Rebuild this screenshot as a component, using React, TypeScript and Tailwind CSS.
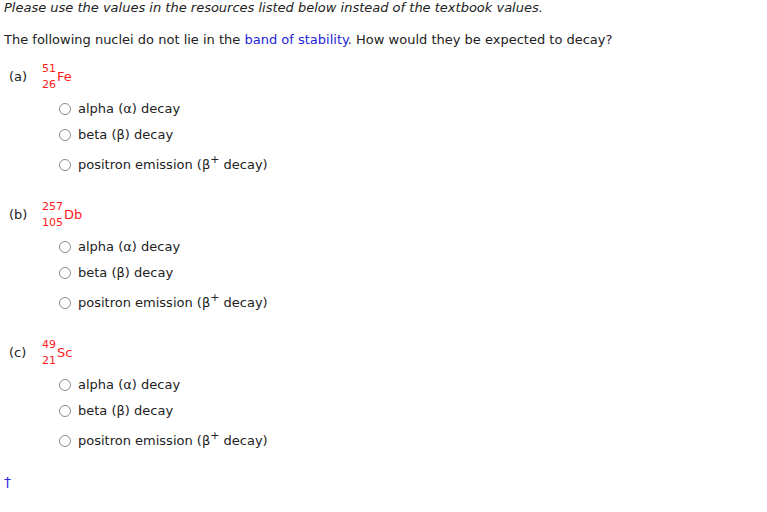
const font = { fontFamily: '"DejaVu Sans", Verdana, sans-serif' };

type Nuclide = { label: string; mass: string; z: string; sym: string };

const parts: Nuclide[] = [
  { label: "(a)", mass: "51", z: "26", sym: "Fe" },
  { label: "(b)", mass: "257", z: "105", sym: "Db" },
  { label: "(c)", mass: "49", z: "21", sym: "Sc" },
];

const Radio = () => (
  <span className="w-[12px] h-[12px] rounded-full border border-[#8a8a8a] bg-white shrink-0" />
);

const Option: React.FC<{ h: string; children: React.ReactNode }> = ({ h, children }) => (
  <div className={`flex items-center pl-[59px] gap-[7px] ${h}`}>
    <Radio />
    <span className="text-[13px] text-[#222]">{children}</span>
  </div>
);

const Part: React.FC<{ n: Nuclide; last?: boolean }> = ({ n, last }) => (
  <div className={last ? "" : "mb-[19px]"}>
    <div className="h-[30px] flex items-center pl-[9px]">
      <span className="text-[13px] text-[#222] w-[33px]">{n.label}</span>
      <span className="inline-flex items-center text-[#ff1a1a]">
        <span className="flex flex-col items-end text-[11px] leading-[16px]">
          <span>{n.mass}</span>
          <span>{n.z}</span>
        </span>
        <span className="text-[13px] ml-[1px]">{n.sym}</span>
      </span>
    </div>
    <div className="mt-[5px]">
      <Option h="h-[24px]">alpha (α) decay</Option>
      <Option h="h-[28px]">beta (β) decay</Option>
      <Option h="h-[32px]">
        positron emission (β<sup className="text-[11px] relative -top-[6px]">+</sup> decay)
      </Option>
    </div>
  </div>
);

export default function App() {
  return (
    <div className="w-[767px] h-[512px] bg-white text-[#222] pt-[1px]" style={font}>
      <p className="italic text-[13px] leading-[14px] pl-[4px]">
        Please use the values in the resources listed below instead of the textbook values.
      </p>
      <p className="text-[13px] leading-[16px] pl-[4px] mt-[17px]">
        The following nuclei do not lie in the{" "}
        <span className="text-[#2424d6]">band of stability</span>. How would they be expected to
        decay?
      </p>
      <div className="mt-[14px]">
        {parts.map((p, i) => (
          <Part key={p.label} n={p} last={i === parts.length - 1} />
        ))}
      </div>
      <div className="mt-[17px] pl-[4px] text-[14px] leading-[16px] text-[#2a2ae0]">†</div>
    </div>
  );
}
